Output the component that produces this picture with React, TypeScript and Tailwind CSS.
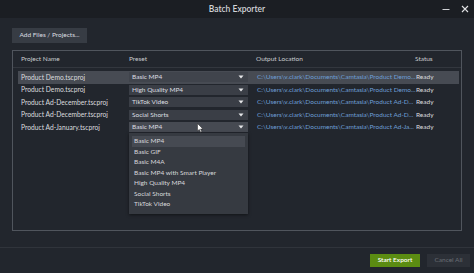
import React from "react";

const rows = [
  { name: "Product Demo.tscproj", preset: "Basic MP4", out: "C:\\Users\\v.clark\\Documents\\Camtasia\\Product Demo...", sel: true },
  { name: "Product Demo.tscproj", preset: "High Quality MP4", out: "C:\\Users\\v.clark\\Documents\\Camtasia\\Product Demo..." },
  { name: "Product Ad-December.tscproj", preset: "TikTok Video", out: "C:\\Users\\v.clark\\Documents\\Camtasia\\Product Ad-D..." },
  { name: "Product Ad-December.tscproj", preset: "Social Shorts", out: "C:\\Users\\v.clark\\Documents\\Camtasia\\Product Ad-D..." },
  { name: "Product Ad-January.tscproj", preset: "Basic MP4", out: "C:\\Users\\v.clark\\Documents\\Camtasia\\Product Ad-Ja...", open: true },
];

const options = [
  "Basic MP4",
  "Basic GIF",
  "Basic M4A",
  "Basic MP4 with Smart Player",
  "High Quality MP4",
  "Social Shorts",
  "TikTok Video",
];

function Caret() {
  return (
    <svg width="6" height="4" viewBox="0 0 6 4" className="shrink-0">
      <path d="M0.5 0.5 H5.5 L3 3.5 Z" fill="#e6e7e9" />
    </svg>
  );
}

export default function App() {
  return (
    <div
      className="w-[474px] h-[273px] bg-[#22262d] flex flex-col text-[#d6d8db] overflow-hidden"
      style={{ fontFamily: "Lato, 'Open Sans', 'Liberation Sans', sans-serif" }}
    >
      {/* title bar */}
      <div className="h-[18px] bg-[#1b1e23] grid grid-cols-[1fr_auto_1fr] items-center">
        <div />
        <div className="text-[8.5px] font-semibold text-[#d2d4d7] leading-none">Batch Exporter</div>
        <div className="flex justify-end items-center gap-[11px] pr-[5px]">
          <svg width="8" height="8" viewBox="0 0 8 8">
            <path d="M0.5 4.5 H7.5" stroke="#cfd1d4" strokeWidth="1" />
          </svg>
          <svg width="8" height="8" viewBox="0 0 8 8">
            <path d="M1 1 L7 7 M7 1 L1 7" stroke="#e2e3e5" strokeWidth="1.1" />
          </svg>
        </div>
      </div>

      {/* body */}
      <div className="px-[12px] pt-[10px]">
        <div className="h-[15px] w-[75px] bg-[#373c44] flex items-center justify-center text-[6.5px] text-[#dcdee1] leading-none">
          Add Files / Projects...
        </div>

        <div className="mt-[7px] h-[181px] border border-[#50555d] relative">
          {/* header */}
          <div className="h-[17px] border-b border-[#33373e] flex items-center pl-[5px] text-[6.5px] text-[#c9cbce] leading-none">
            <div className="w-[110px] pl-[3px]">Project Name</div>
            <div className="w-[128px] pl-[1px]">Preset</div>
            <div className="w-[159px]">Output Location</div>
            <div>Status</div>
          </div>

          <div className="pt-[3px] pl-[5px] pr-[2px]">
            {rows.map((r, i) => (
              <div
                key={i}
                className={`h-[12.5px] flex items-center text-[6.5px] leading-none ${r.sel ? "bg-[#474b53]" : ""}`}
              >
                <div className="w-[111px] pl-[3px] whitespace-nowrap text-[6.7px] text-[#dadcdf]">{r.name}</div>
                <div className="w-[128px] relative">
                  <div
                    className={`w-[119px] h-[10px] flex items-center justify-between pl-[3px] pr-[4px] ${
                      r.sel ? "bg-[#40444c]" : r.open ? "bg-[#464a52]" : "bg-[#3a3e46]"
                    }`}
                  >
                    <span className="whitespace-nowrap text-[#dcdee1]">{r.preset}</span>
                    <Caret />
                  </div>
                  {r.open && (
                    <div className="absolute left-0 top-[11px] w-[119px] h-[81px] bg-[#363a41] shadow-[0_1px_3px_rgba(0,0,0,0.5)] pt-[3px] px-[3px] z-10">
                      {options.map((o, j) => (
                        <div
                          key={j}
                          className={`h-[10.5px] flex items-center pl-[2px] whitespace-nowrap text-[6.5px] text-[#d6d8db] ${
                            j === 0 ? "bg-[#464a52]" : ""
                          }`}
                        >
                          {o}
                        </div>
                      ))}
                    </div>
                  )}
                  {r.open && (
                    <svg
                      width="7"
                      height="10"
                      viewBox="0 0 7 10"
                      className="absolute left-[68px] top-[1px] z-20"
                    >
                      <path
                        d="M0.5 0.5 L0.5 8 L2.3 6.4 L3.6 9.3 L4.8 8.8 L3.6 6 L6 6 Z"
                        fill="#ffffff"
                        stroke="#222"
                        strokeWidth="0.5"
                      />
                    </svg>
                  )}
                </div>
                <div className="w-[159px] whitespace-nowrap text-[#6e9fd6]">{r.out}</div>
                <div className="text-[#dadcdf]">Ready</div>
              </div>
            ))}
          </div>
        </div>
      </div>

      {/* footer */}
      <div className="mt-[16px] border-t border-[#30343b] flex justify-end items-center gap-[7px] pr-[4px] pt-[6px]">
        <div className="w-[50px] h-[13px] bg-[#5b8c12] flex items-center justify-center text-[6.5px] font-semibold text-white leading-none">
          Start Export
        </div>
        <div className="w-[43px] h-[13px] bg-[#2c3037] flex items-center justify-center text-[6.5px] text-[#6a6e75] leading-none">
          Cancel All
        </div>
      </div>
    </div>
  );
}
